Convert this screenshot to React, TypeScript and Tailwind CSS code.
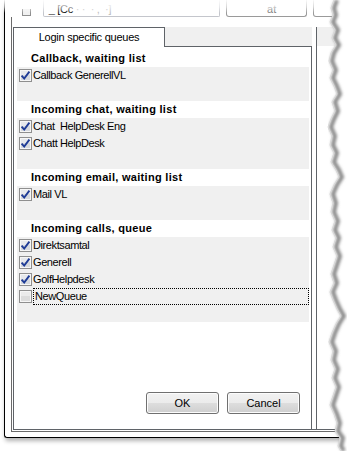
import clsx from 'clsx'

type Group = { title: string; items: { label: string; checked: boolean; focused?: boolean }[]; extra: number }

const groups: Group[] = [
  { title: 'Callback, waiting list', items: [{ label: 'Callback GenerellVL', checked: true }], extra: 1 },
  {
    title: 'Incoming chat, waiting list',
    items: [
      { label: 'Chat  HelpDesk Eng', checked: true },
      { label: 'Chatt HelpDesk', checked: true },
    ],
    extra: 1,
  },
  { title: 'Incoming email, waiting list', items: [{ label: 'Mail VL', checked: true }], extra: 1 },
  {
    title: 'Incoming calls, queue',
    items: [
      { label: 'Direktsamtal', checked: true },
      { label: 'Generell', checked: true },
      { label: 'GolfHelpdesk', checked: true },
      { label: 'NewQueue', checked: false, focused: true },
    ],
    extra: 1,
  },
]

function CheckBox({ checked }: { checked: boolean }) {
  return (
    <svg width="13" height="13" viewBox="0 0 13 13" className="shrink-0">
      <rect x="0.5" y="0.5" width="12" height="12" fill="#f6f6f6" stroke="#8f8f8f" />
      <rect x="2" y="2" width="9" height="9" fill={checked ? '#d6d9de' : '#dcdcdc'} />
      <rect x="2" y="2" width="9" height="4" fill={checked ? '#e6e8ec' : '#ebebeb'} />
      {checked && (
        <path d="M2.6 6.6 L5.2 9.6 L10.4 2.6" stroke="#1e3b96" strokeWidth="1.9" fill="none" />
      )}
    </svg>
  )
}

function WinButton({ label }: { label: string }) {
  return (
    <button className="w-[73px] h-[22px] rounded-[3px] border border-[#707070] bg-[linear-gradient(to_bottom,#f2f2f2_0%,#ebebeb_50%,#dddddd_51%,#cfcfcf_100%)] text-[11px] text-black shadow-[inset_0_0_0_1px_#fcfcfc]">
      {label}
    </button>
  )
}

// jagged right edge of the torn screenshot
const edge = [
  [334, 0], [331, 8], [333, 15], [330, 22], [335, 30], [332, 38], [336, 45], [331, 53], [329, 61],
  [333, 70], [330, 78], [334, 86], [337, 94], [332, 102], [335, 111], [331, 119], [328, 127], [332, 136],
  [330, 145], [334, 153], [331, 162], [336, 170], [339, 177], [334, 185], [330, 194], [333, 203],
  [331, 212], [335, 221], [332, 230], [336, 238], [333, 247], [337, 256], [334, 265], [331, 274],
  [334, 283], [330, 292], [333, 300], [337, 309], [341, 316], [336, 324], [332, 333], [329, 342],
  [333, 351], [331, 360], [335, 369], [332, 378], [336, 387], [333, 396], [330, 405], [334, 414],
  [337, 423], [335, 431], [340, 438], [338, 446], [341, 451],
]

function TornEdge() {
  const line = edge.map(([x, y]) => `${x},${y}`).join(' ')
  const fill = `${line} 353,451 353,0`
  return (
    <svg width="353" height="451" className="absolute left-0 top-0 pointer-events-none">
      <defs>
        <filter id="blur" x="-20%" y="-5%" width="140%" height="110%">
          <feGaussianBlur stdDeviation="1.4" />
        </filter>
        <linearGradient id="topfade" x1="0" y1="0" x2="0" y2="1">
          <stop offset="0" stopColor="#fff" stopOpacity="0.95" />
          <stop offset="0.55" stopColor="#fff" stopOpacity="0.6" />
          <stop offset="1" stopColor="#fff" stopOpacity="0" />
        </linearGradient>
      </defs>
      <rect x="0" y="0" width="353" height="13" fill="url(#topfade)" />
      <polygon points={fill} fill="#fff" />
      <polyline
        points={edge.map(([x, y]) => `${x + 3},${y}`).join(' ')}
        stroke="#888"
        strokeWidth="4"
        fill="none"
        filter="url(#blur)"
      />
      <polyline points={line} stroke="#d8d8d8" strokeWidth="1" fill="none" />
    </svg>
  )
}

export default function App() {
  return (
    <div
      className="relative w-[353px] h-[451px] overflow-hidden bg-white text-black"
      style={{ fontFamily: '"Liberation Sans", Arial, sans-serif' }}
    >
      <div className="ml-[4px] w-[338px] h-[438px] flex flex-col border-l border-b border-black rounded-bl-[3px] bg-white shadow-[1px_3px_4px_rgba(0,0,0,0.3)]">
        {/* partially visible row above the tabs */}
        <div className="h-[17px] flex items-end relative">
          <div className="ml-[17px] mb-[1px] w-[9px] h-[7px] border border-t-0 border-[#8f8f8f] bg-[#f0f0f0]" />
          <div className="ml-[12px] w-[185px] h-[18px] flex items-end pl-[5px] pb-[1px] border border-t-0 border-[#c4c6cc] rounded-b-[2px] text-[11px] leading-[12px] tracking-[-0.3px]">
            <span className="text-[#555]">_&nbsp;</span>
            <span>[Cc</span>
            <span className="text-[#bbb]">&nbsp;· ·&nbsp; · ,&nbsp; ·]</span>
          </div>
          <div className="ml-[6px] w-[84px] h-[18px] flex items-end justify-end pr-[30px] pb-[1px] border border-t-0 border-[#9a9a9a] rounded-b-[3px] text-[11px] leading-[12px] text-[#777]">
            at
          </div>
          <div className="ml-[6px] w-[30px] h-[18px] border border-t-0 border-[#9a9a9a] rounded-b-[3px]" />
        </div>

        {/* window body, double frame */}
        <div className="ml-[6px] flex-1 flex flex-col border-l border-b border-[#6b6b6b] mb-[5px]">
          <div className="mt-[10px] ml-[1px] flex-1 flex border-b border-[#5f6368] mb-[1px]">
            {/* tab control */}
            <div className="w-[299px] flex flex-col">
              <div className="h-[20px] flex">
                <div className="w-[152px] h-[20px] flex items-center justify-center border-l border-t border-r border-[#5f6368] bg-white text-[11px] tracking-[-0.25px]">
                  Login specific queues
                </div>
                <div className="flex-1 border-b border-[#5f6368] bg-[#f0f0f0]" />
              </div>
              <div className="flex-1 flex flex-col border-l border-r border-[#5f6368] bg-white">
                <div className="pt-[3px] pl-[3px] pr-[2px]">
                  {groups.map((g) => (
                    <div key={g.title}>
                      <div className="h-[17px] flex items-center pl-[14px] text-[11px] font-bold tracking-[0.3px]">
                        {g.title}
                      </div>
                      <div className="bg-[#f0f0f0]">
                        {g.items.map((it) => (
                          <div key={it.label} className="h-[17px] flex items-center pl-[2px]">
                            <CheckBox checked={it.checked} />
                            <span
                              className={clsx(
                                'h-[17px] flex items-center text-[11px] tracking-[-0.4px] whitespace-pre',
                                it.focused ? 'flex-1 ml-[1px] pl-[1px] border border-dotted border-black' : 'ml-[1px]',
                              )}
                            >
                              {it.label}
                            </span>
                          </div>
                        ))}
                        {Array.from({ length: g.extra }).map((_, i) => (
                          <div key={i} className="h-[17px]" />
                        ))}
                      </div>
                    </div>
                  ))}
                </div>
                <div className="flex-1" />
                <div className="flex justify-end gap-[8px] pr-[11px] pb-[15px]">
                  <WinButton label="OK" />
                  <WinButton label="Cancel" />
                </div>
              </div>
            </div>
            {/* neighbouring panel */}
            <div className="ml-[4px] flex-1 flex flex-col border-l border-[#5f6368]">
              <div className="h-[19px] bg-[#f0f0f0]" />
              <div className="flex-1" />
            </div>
          </div>
        </div>
      </div>
      <TornEdge />
    </div>
  )
}
